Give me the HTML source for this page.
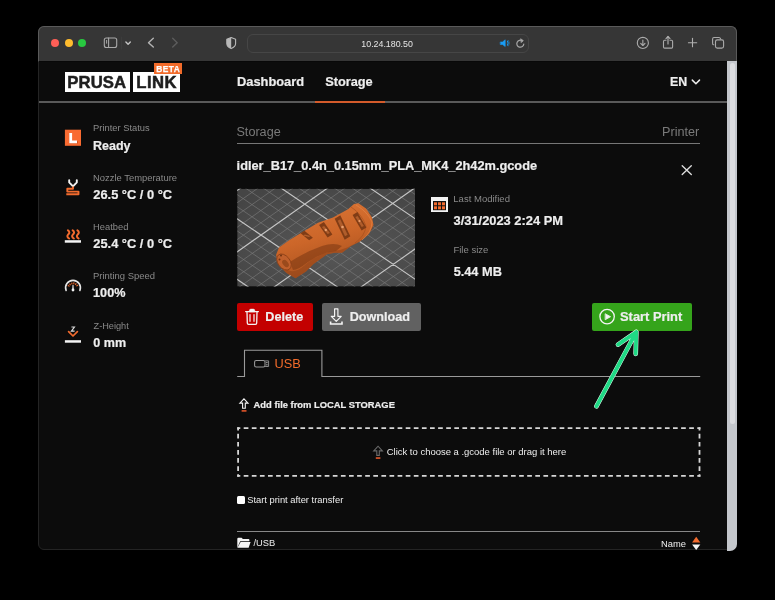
<!DOCTYPE html>
<html><head><meta charset="utf-8">
<style>
*{margin:0;padding:0;box-sizing:border-box}
html,body{width:775px;height:600px;background:#000;overflow:hidden}
body{position:relative;font-family:"Liberation Sans",sans-serif;-webkit-font-smoothing:antialiased}
.a{position:absolute;white-space:nowrap;line-height:1}
#win{position:absolute;left:38px;top:26px;width:699px;height:524px;border-radius:6px;background:#0c0c0c;border:1px solid #242424}
#tb{position:absolute;left:38px;top:26px;width:699px;height:35.5px;background:#363636;border:1px solid #5a5a5a;border-bottom:1px solid #080808;border-radius:6px 6px 0 0}
.g{color:#8a8a8a}
.w{color:#eee}
.b{font-weight:bold;-webkit-text-stroke:0.2px currentColor}
</style></head><body><div id="root" style="position:absolute;left:0;top:0;width:775px;height:600px;will-change:transform">
<div id="win"></div>
<div id="tb"></div>
<!-- toolbar items (page coords) -->
<div class="a" style="left:51.3px;top:39.15px;width:8.2px;height:8.2px;border-radius:50%;background:#fe5f57"></div>
<div class="a" style="left:64.7px;top:39.15px;width:8.2px;height:8.2px;border-radius:50%;background:#febc2e"></div>
<div class="a" style="left:78.1px;top:39.15px;width:8.2px;height:8.2px;border-radius:50%;background:#28c840"></div>

<!-- url bar -->
<div class="a" style="left:246.5px;top:34px;width:282px;height:19px;border-radius:6px;border:1px solid #464646;background:#363636"></div>
<div id="t_102418050" class="a" style="left:361.32px;top:39.66px;font-size:8.83px;color:#e6e6e6">10.24.180.50</div>

<svg class="a" style="left:0;top:0" width="775" height="600" viewBox="0 0 775 600" fill="none" stroke-linecap="round" stroke-linejoin="round">
<!-- sidebar toggle -->
<rect x="104.3" y="38" width="12.4" height="9.5" rx="2" stroke="#a9a9a9" stroke-width="1.1"/>
<line x1="108.6" y1="38" x2="108.6" y2="47.5" stroke="#a9a9a9" stroke-width="1.1"/>
<rect x="106" y="40" width="1.1" height="3.6" fill="#9a9a9a" stroke="none"/>
<line x1="121.7" y1="37" x2="121.7" y2="49" stroke="#404040" stroke-width="0.8"/>
<polyline points="125.9,42 128.1,44.2 130.3,42" stroke="#c4c4c4" stroke-width="1.4"/>
<polyline points="153.3,38.3 148.5,42.7 153.3,47.1" stroke="#b4b4b4" stroke-width="1.4"/>
<polyline points="172.7,38.3 177.2,42.7 172.7,47.1" stroke="#5c5c5c" stroke-width="1.4"/>
<!-- shield -->
<path d="M231.2 37.6 L226.8 39.3 V43.6 Q226.8 46.9 231.2 48.6 Q235.6 46.9 235.6 43.6 V39.3 Z" stroke="#b8b8b8" stroke-width="1.1"/>
<path d="M231.2 37.6 L226.8 39.3 V43.6 Q226.8 46.9 231.2 48.6 Z" fill="#b8b8b8" stroke="none"/>
<!-- speaker -->
<path d="M500.6 42 H502.5 L505.2 39.8 V46.5 L502.5 44.5 H500.6 Z" fill="#1a9cf4" stroke="#1a9cf4" stroke-width="0.6"/>
<path d="M507.5 41.2 Q508.9 43.15 507.5 45.1" stroke="#1a9cf4" stroke-width="1.1"/>
<path d="M508.6 40.3 Q510.6 43.15 508.6 46" stroke="#1a9cf4" stroke-width="0.6" opacity="0.7"/>
<!-- reload -->
<path d="M522.4 40.9 A3.5 3.5 0 1 0 523.8 44" stroke="#a8a8a8" stroke-width="1.2"/>
<path d="M520.9 38.9 L523.4 40.6 L521.3 42.5 Z" fill="#a8a8a8" stroke="#a8a8a8" stroke-width="0.6"/>
<!-- download circle -->
<circle cx="642.85" cy="42.9" r="5.55" stroke="#ababab" stroke-width="1.1"/>
<line x1="642.85" y1="40" x2="642.85" y2="45.3" stroke="#ababab" stroke-width="1.1"/>
<polyline points="640.7,43.3 642.85,45.5 645,43.3" stroke="#ababab" stroke-width="1.1"/>
<!-- share -->
<path d="M666 40.3 H664.6 Q663.5 40.3 663.5 41.4 V47 Q663.5 48.1 664.6 48.1 H671.5 Q672.6 48.1 672.6 47 V41.4 Q672.6 40.3 671.5 40.3 H670" stroke="#ababab" stroke-width="1.1"/>
<line x1="668" y1="36.6" x2="668" y2="44" stroke="#ababab" stroke-width="1.2"/>
<polyline points="666,38.6 668,36.4 670,38.6" stroke="#ababab" stroke-width="1.2"/>
<!-- plus -->
<line x1="688.4" y1="42.7" x2="696.7" y2="42.7" stroke="#b0b0b0" stroke-width="1.1"/>
<line x1="692.5" y1="38.4" x2="692.5" y2="46.8" stroke="#b0b0b0" stroke-width="1.1"/>
<!-- tabs -->
<path d="M713.8 44.8 Q712.6 44.8 712.6 43.4 V38.9 Q712.6 37.5 714 37.5 H718.9 Q720.2 37.5 720.6 38.9" stroke="#ababab" stroke-width="1.1"/>
<rect x="715.5" y="39.9" width="8.1" height="8.2" rx="1.8" stroke="#ababab" stroke-width="1.1"/>
</svg>
<!-- header -->
<div class="a" style="left:64.9px;top:71.5px;width:65.2px;height:20.2px;background:#fff"></div>
<div id="t_PRUSA" class="a b" style="left:67.3px;top:75px;font-size:16.7px;letter-spacing:0.1px;color:#1e1e1e;-webkit-text-stroke:0.5px #1e1e1e">PRUSA</div>
<div class="a" style="left:133.1px;top:71.5px;width:47.2px;height:20.2px;background:#fff"></div>
<div id="t_LINK" class="a b" style="left:136.3px;top:75px;font-size:16.7px;letter-spacing:0.45px;color:#1e1e1e;-webkit-text-stroke:0.5px #1e1e1e">LINK</div>
<div class="a" style="left:154.1px;top:63.4px;width:28.1px;height:10.3px;background:#f26b2a"></div>
<div id="t_BETA" class="a b" style="left:156.3px;top:65px;font-size:8.4px;letter-spacing:0.42px;color:#fff;-webkit-text-stroke:0.25px #fff">BETA</div>

<div id="t_Dashboard" class="a b w" style="left:236.94px;top:76.2px;font-size:12.86px">Dashboard</div>
<div id="t_Storage" class="a b w" style="left:325.14px;top:76.1px;font-size:12.79px">Storage</div>
<div id="t_EN" class="a b w" style="left:669.89px;top:75.9px;font-size:12.38px">EN</div>
<div class="a" style="left:38.5px;top:101px;width:688.5px;height:1.5px;background:#5a5a5a"></div>
<div class="a" style="left:314.5px;top:100.5px;width:70px;height:2px;background:#d45b2b"></div>

<!-- sidebar -->

<div id="t_PrinterSta" class="a g" style="left:93.06px;top:123.95px;font-size:9.35px">Printer Status</div>
<div id="t_Ready" class="a b w" style="left:93.0px;top:140.2px;font-size:12.51px">Ready</div>
<div id="t_NozzleTemp" class="a g" style="left:93.01px;top:172.8px;font-size:9.42px">Nozzle Temperature</div>
<div id="t_265C0C" class="a b w" style="left:93.32px;top:189.0px;font-size:12.83px">26.5 °C / 0 °C</div>
<div id="t_Heatbed" class="a g" style="left:93.09px;top:222.91px;font-size:9.34px">Heatbed</div>
<div id="t_254C0C" class="a b w" style="left:93.32px;top:237.8px;font-size:12.83px">25.4 °C / 0 °C</div>
<div id="t_PrintingSp" class="a g" style="left:93.08px;top:271.34px;font-size:9.45px">Printing Speed</div>
<div id="t_100" class="a b w" style="left:93.1px;top:287.18px;font-size:12.65px">100%</div>
<div id="t_ZHeight" class="a g" style="left:93.57px;top:321.8px;font-size:9.18px">Z-Height</div>
<div id="t_0mm" class="a b w" style="left:93.35px;top:336.81px;font-size:12.57px">0 mm</div>

<svg class="a" style="left:0;top:0" width="775" height="600" viewBox="0 0 775 600" fill="none" stroke-linecap="round" stroke-linejoin="round">
<!-- printer status -->
<rect x="64.9" y="129.7" width="16.1" height="16.1" fill="#f96b31"/>
<path d="M70.1 134 V141.8 H77.4" stroke="#9a3a14" stroke-width="2.6" stroke-linecap="butt" stroke-linejoin="miter" opacity="0.5" transform="translate(0.5,0.5)"/>
<path d="M70.7 133 V141.8 H77" stroke="#fff" stroke-width="2.8" stroke-linecap="butt" stroke-linejoin="miter"/>
<!-- nozzle -->
<path d="M69.2 180.1 V182.4 L73 186.4 L76.8 182.4 V180.1" stroke="#f2f2f2" stroke-width="1.9"/>
<path d="M73 186.6 V188.8 H67.3 V191.6 H78.5 V194.3 H66.3" stroke="#f26b2e" stroke-width="1.9" stroke-linejoin="round" stroke-linecap="butt"/>
<!-- heatbed -->
<path d="M67.90 230.4 C69.90 231.7 69.60 233.1 68.20 234.4 C66.80 235.7 67.20 237.3 69.10 238.5 M72.65 230.4 C74.65 231.7 74.35 233.1 72.95 234.4 C71.55 235.7 71.95 237.3 73.85 238.5 M77.40 230.4 C79.40 231.7 79.10 233.1 77.70 234.4 C76.30 235.7 76.70 237.3 78.60 238.5" stroke="#f26b2e" stroke-width="2"/>
<rect x="64.8" y="240.2" width="16.2" height="2.5" fill="#f4f4f4"/>
<!-- gauge -->
<path d="M66.1 290.4 A7.4 7.4 0 1 1 79.9 290.4" stroke="#e6e6e6" stroke-width="1.6" stroke-linecap="round"/>
<path d="M68.4 286.4 A5 5 0 0 1 77.6 286.4" stroke="#e0632b" stroke-width="2" stroke-dasharray="1.2 0.8" stroke-linecap="butt"/>
<path d="M72.6 290 L73 285 L73.4 290 Z" fill="#f4f4f4" stroke="#f4f4f4" stroke-width="0.6"/>
<circle cx="73" cy="290" r="1.4" fill="#f4f4f4"/>
<!-- z height -->
<path d="M71.4 327 H74.4 L71.4 331.1 H74.6" stroke="#d8d8d8" stroke-width="1.2" stroke-linecap="butt" stroke-linejoin="miter"/>
<polyline points="68.6,331.7 73,336 77.4,331.7" stroke="#f26b2e" stroke-width="1.7"/>
<rect x="64.9" y="340.2" width="16.1" height="2.5" fill="#f4f4f4"/>
</svg>
<!-- main -->
<div id="t_Storage2" class="a" style="left:236.44px;top:125.64px;font-size:12.65px;color:#7a7a7a">Storage</div>
<div id="t_Printer" class="a" style="left:662.05px;top:125.6px;font-size:12.63px;color:#7a7a7a">Printer</div>
<div class="a" style="left:237px;top:143px;width:463px;height:1px;background:#777"></div>
<div id="t_idlerB1704" class="a b w" style="left:236.59px;top:160.2px;font-size:12.79px">idler_B17_0.4n_0.15mm_PLA_MK4_2h42m.gcode</div>

<!-- thumb -->
<svg class="a" style="left:0;top:0" width="775" height="600" viewBox="0 0 775 600">
<defs><clipPath id="thc"><rect x="237.2" y="188.8" width="177.8" height="97.8"/></clipPath>
<radialGradient id="thg" cx="0.55" cy="0.6" r="0.7"><stop offset="0" stop-color="#575757"/><stop offset="1" stop-color="#454545"/></radialGradient>
<linearGradient id="pg" x1="0" y1="0" x2="0.35" y2="1"><stop offset="0" stop-color="#de7838"/><stop offset="0.55" stop-color="#cc6629"/><stop offset="1" stop-color="#a9521f"/></linearGradient>
</defs>
<g clip-path="url(#thc)">
<rect x="237.2" y="188.8" width="177.8" height="97.8" fill="url(#thg)"/>
<path d="M-323.4 188.9L338.2 638.7 M-322.5 291.0L331.3 -170.0 M-314.6 182.7L346.9 632.6 M-313.7 297.0L340.2 -163.9 M-305.9 176.5L355.7 626.4 M-304.8 303.0L349.0 -157.9 M-297.1 170.4L364.4 620.2 M-296.0 309.0L357.9 -151.9 M-279.7 158.0L381.9 607.9 M-278.3 321.1L375.6 -139.9 M-270.9 151.9L390.6 601.7 M-269.4 327.1L384.4 -133.9 M-262.2 145.7L399.4 595.6 M-260.6 333.1L393.3 -127.8 M-253.4 139.5L408.1 589.4 M-251.7 339.1L402.1 -121.8 M-235.9 127.2L425.6 577.1 M-234.0 351.2L419.8 -109.8 M-227.2 121.1L434.4 570.9 M-225.2 357.2L428.7 -103.8 M-218.4 114.9L443.1 564.7 M-216.3 363.2L437.5 -97.8 M-209.7 108.7L451.8 558.6 M-207.5 369.2L446.4 -91.7 M-192.2 96.4L469.3 546.2 M-189.8 381.2L464.0 -79.7 M-183.5 90.2L478.1 540.1 M-180.9 387.3L472.9 -73.7 M-174.7 84.1L486.8 533.9 M-172.1 393.3L481.7 -67.7 M-166.0 77.9L495.6 527.7 M-163.3 399.3L490.6 -61.7 M-148.5 65.6L513.1 515.4 M-145.6 411.3L508.3 -49.6 M-139.7 59.4L521.8 509.2 M-136.7 417.3L517.1 -43.6 M-131.0 53.2L530.6 503.1 M-127.9 423.4L526.0 -37.6 M-122.2 47.1L539.3 496.9 M-119.0 429.4L534.8 -31.6 M-104.8 34.7L556.8 484.6 M-101.3 441.4L552.5 -19.5 M-96.0 28.6L565.5 478.4 M-92.5 447.4L561.4 -13.5 M-87.3 22.4L574.3 472.3 M-83.6 453.4L570.2 -7.5 M-78.5 16.2L583.0 466.1 M-74.8 459.5L579.1 -1.5 M-61.0 3.9L600.5 453.8 M-57.1 471.5L596.8 10.5 M-52.3 -2.3L609.3 447.6 M-48.2 477.5L605.6 16.6 M-43.5 -8.4L618.0 441.4 M-39.4 483.5L614.5 22.6 M-34.8 -14.6L626.8 435.3 M-30.5 489.5L623.3 28.6 M-17.3 -26.9L644.2 422.9 M-12.8 501.6L641.0 40.6 M-8.6 -33.1L653.0 416.8 M-4.0 507.6L649.9 46.6 M0.2 -39.2L661.7 410.6 M4.9 513.6L658.7 52.7 M8.9 -45.4L670.5 404.4 M13.7 519.6L667.6 58.7 M26.4 -57.7L688.0 392.1 M31.4 531.7L685.3 70.7 M35.2 -63.9L696.7 385.9 M40.3 537.7L694.1 76.7 M43.9 -70.1L705.5 379.8 M49.1 543.7L702.9 82.7 M52.7 -76.2L714.2 373.6 M58.0 549.7L711.8 88.8 M70.2 -88.6L731.7 361.3 M75.6 561.7L729.5 100.8 M78.9 -94.7L740.4 355.1 M84.5 567.8L738.3 106.8 M87.6 -100.9L749.2 348.9 M93.3 573.8L747.2 112.8 M96.4 -107.1L757.9 342.8 M102.2 579.8L756.0 118.8 M113.9 -119.4L775.4 330.5 M119.9 591.8L773.7 130.9 M122.6 -125.6L784.2 324.3 M128.7 597.8L782.6 136.9 M131.4 -131.7L792.9 318.1 M137.6 603.9L791.4 142.9 M140.1 -137.9L801.7 312.0 M146.4 609.9L800.3 148.9 M157.6 -150.2L819.1 299.6 M164.1 621.9L818.0 161.0 M166.3 -156.4L827.9 293.5 M173.0 627.9L826.8 167.0 M175.1 -162.6L836.6 287.3 M181.8 633.9L835.7 173.0 M183.8 -168.7L845.4 281.1 M190.7 640.0L844.5 179.0" stroke="#7a7a7a" stroke-width="0.65" fill="none"/>
<path d="M-332.1 195.0L329.4 644.9 M-331.4 285.0L322.5 -176.0 M-288.4 164.2L373.1 614.1 M-287.1 315.1L366.7 -145.9 M-244.7 133.4L416.9 583.2 M-242.9 345.1L411.0 -115.8 M-200.9 102.6L460.6 552.4 M-198.6 375.2L455.2 -85.7 M-157.2 71.7L504.3 521.6 M-154.4 405.3L499.4 -55.6 M-113.5 40.9L548.0 490.8 M-110.2 435.4L543.7 -25.6 M-69.8 10.1L591.8 459.9 M-65.9 465.5L587.9 4.5 M-26.0 -20.8L635.5 429.1 M-21.7 495.6L632.2 34.6 M17.7 -51.6L679.2 398.3 M22.6 525.6L676.4 64.7 M61.4 -82.4L722.9 367.4 M66.8 555.7L720.6 94.8 M105.1 -113.2L766.7 336.6 M111.0 585.8L764.9 124.9 M148.9 -144.1L810.4 305.8 M155.3 615.9L809.1 154.9 M192.6 -174.9L854.1 275.0 M199.5 646.0L853.4 185.0" stroke="#c4c4c4" stroke-width="1.15" fill="none"/>
<path id="pbody" d="M358.5 203.3 L366 208.5 L372 217.5 L373.5 225 L369 234 L360 241.5 L351 246 L342 252.8 L334.5 252.8 L327 254.3 L313.5 264 L306 271.5 L295.5 278.3 L286.5 273 L279 265.5 L276 255 L279 247.5 L289.5 240 L303 231.8 L318 222.8 L333 217.5 L348 209.3 L354 204 Z" fill="url(#pg)"/>
<path d="M279 265.5 L286.5 273 L295.5 278.3 L306 271.5 L313.5 264 L327 254.3 L334.5 252.8 L342 252.8 L351 246 L360 241.5 L369 234 L373.5 225 L372 230 Q360 244 340 250 Q320 252 305 265 Q295 274 288 270 Z" fill="#8f4419" opacity="0.55"/>
<path d="M290 262 Q305 252 322 246 Q334 242 342 246 L336 251 Q322 252 308 262 Q298 270 293 270 Z" fill="#7a3713" opacity="0.55"/>
<path d="M356 205 Q368 212 372 222 Q372 232 362 240" stroke="#e8884a" stroke-width="1" fill="none" opacity="0.6"/>
<path d="M351 207 Q362 214 366 226 Q365 236 355 243" stroke="#9c4a1c" stroke-width="0.9" fill="none" opacity="0.6"/>
<ellipse cx="284" cy="262" rx="6" ry="9" transform="rotate(-38 284 262)" fill="#c0602c" stroke="#8e4219" stroke-width="0.9"/>
<ellipse cx="285.5" cy="263.5" rx="2.6" ry="4.2" transform="rotate(-38 285.5 263.5)" fill="#9a4a1c"/>
<circle cx="281" cy="255.5" r="1" fill="#6e3311"/><circle cx="279.5" cy="259.5" r="1" fill="#6e3311"/>
<path d="M319.1 224.9 L323.9 222.1 L332.4 234.6 L327.6 237.4 Z" fill="#7a3814" opacity="0.92"/>
<path d="M321.9 227.1 L324.1 225.9 L329.9 232.9 L327.7 234.1 Z" fill="#b5602e" opacity="0.9"/>
<path d="M334.7 218.7 L340.3 215.3 L350.3 236.3 L344.7 239.7 Z" fill="#7a3814" opacity="0.92"/>
<path d="M337.7 220.8 L340.3 219.2 L347.6 234.7 L345.0 236.3 Z" fill="#b5602e" opacity="0.9"/>
<path d="M352.6 214.9 L357.4 212.1 L366.4 227.6 L361.6 230.4 Z" fill="#7a3814" opacity="0.92"/>
<path d="M355.4 217.1 L357.6 215.9 L363.9 225.9 L361.7 227.1 Z" fill="#b5602e" opacity="0.9"/>
<path d="M300.6 233.2 L304.4 230.8 L312.9 237.8 L309.1 240.2 Z" fill="#7a3814" opacity="0.92"/>
<path d="M303.1 235.5 L304.9 234.5 L310.7 236.0 L308.9 237.0 Z" fill="#b5602e" opacity="0.9"/>
<circle cx="325.8" cy="230" r="1.2" fill="#e8a070"/><circle cx="342.5" cy="227" r="1.3" fill="#e8a070"/><circle cx="359.5" cy="221" r="1.1" fill="#e8a070"/>
</g>
</svg>
<!-- /thumb -->
<div id="t_LastModifi" class="a g" style="left:453.34px;top:193.73px;font-size:9.52px">Last Modified</div>
<div id="t_3312023224" class="a b w" style="left:453.5px;top:214.8px;font-size:12.88px">3/31/2023 2:24 PM</div>
<div id="t_Filesize" class="a g" style="left:453.46px;top:244.77px;font-size:9.5px">File size</div>
<div id="t_544MB" class="a b w" style="left:453.63px;top:265.8px;font-size:12.77px">5.44 MB</div>

<div class="a" style="left:237px;top:303px;width:76px;height:28px;border-radius:2px;background:#c30000"></div>
<div id="t_Delete" class="a b w" style="left:265.35px;top:310.7px;font-size:12.61px">Delete</div>
<div class="a" style="left:321.5px;top:303px;width:99px;height:28px;border-radius:2px;background:#616161"></div>
<div id="t_Download" class="a b w" style="left:349.63px;top:310.7px;font-size:12.66px">Download</div>
<div class="a" style="left:592px;top:303px;width:100px;height:28px;border-radius:2px;background:#35a41b"></div>
<div id="t_StartPrint" class="a b w" style="left:620.03px;top:310.7px;font-size:12.89px">Start Print</div>

<div id="t_USB" class="a" style="left:274.58px;top:358.0px;font-size:12.78px;color:#f26b2a">USB</div>
<div id="t_Addfilefro" class="a b w" style="left:253.6px;top:400.5px;font-size:9.38px">Add file from LOCAL STORAGE</div>
<svg class="a" style="left:0;top:0" width="775" height="600" viewBox="0 0 775 600" fill="none">
<g stroke="#d6d6d6" stroke-width="1.8" stroke-dasharray="4.7 3.4" stroke-dashoffset="1.6">
<path d="M237.2 428.2 H700.4"/><path d="M237.2 475.9 H700.4"/><path d="M238.1 427.3 V476.8"/><path d="M699.5 427.3 V476.8"/>
</g></svg>
<div id="t_Clicktocho" class="a w" style="left:386.73px;top:447.05px;font-size:9.47px">Click to choose a .gcode file or drag it here</div>
<div class="a" style="left:237px;top:496px;width:8px;height:8px;border-radius:1.5px;background:#fff"></div>
<div id="t_Startprint" class="a w" style="left:247.2px;top:496.22px;font-size:9.35px">Start print after transfer</div>
<div class="a" style="left:237px;top:531px;width:463px;height:1px;background:#888"></div>
<div id="t_USB2" class="a w" style="left:253.39px;top:538.58px;font-size:9.34px">/USB</div>
<div id="t_Name" class="a w" style="left:660.98px;top:539.64px;font-size:9.37px">Name</div>

<svg class="a" style="left:0;top:0" width="775" height="600" viewBox="0 0 775 600" fill="none" stroke-linecap="round" stroke-linejoin="round">
<!-- EN chevron -->
<polyline points="692.3,80.1 695.9,83.7 699.5,80.1" stroke="#ececec" stroke-width="1.5"/>
<!-- close x -->
<path d="M682.2 165.7 L691.3 174.6 M691.3 165.7 L682.2 174.6" stroke="#dedede" stroke-width="1.35"/>
<!-- calendar -->
<rect x="431" y="197" width="17" height="15" fill="#f2f2f2"/>
<rect x="433" y="201" width="13" height="9.2" fill="#141414"/>
<g fill="#f36a2d">
<rect x="434" y="202.3" width="3" height="3"/><rect x="438" y="202.3" width="3" height="3"/><rect x="442" y="202.3" width="3" height="3"/>
<rect x="434" y="206.3" width="3" height="3"/><rect x="438" y="206.3" width="3" height="3"/><rect x="442" y="206.3" width="3" height="3"/>
</g>
<!-- trash -->
<path d="M245.6 311.6 H258.4" stroke="#f4f4f4" stroke-width="1.3"/>
<path d="M249.4 311.6 V310.6 Q249.4 309.1 250.9 309.1 H253.3 Q254.8 309.1 254.8 310.6 V311.6 Z" fill="#f4f4f4" stroke="#f4f4f4" stroke-width="0.5"/>
<path d="M247 312 L247.3 323 Q247.3 324.3 248.6 324.3 H255.4 Q256.7 324.3 256.7 323 L257 312" stroke="#f4f4f4" stroke-width="1.3"/>
<path d="M250 314.6 V321.2 M254 314.6 V321.2" stroke="#f0d0d0" stroke-width="1.4"/>
<!-- download icon -->
<path d="M334.6 308.9 H337.9 V316.3 H341.2 L336.25 321.3 L331.3 316.3 H334.6 Z" stroke="#f4f4f4" stroke-width="1.2"/>
<path d="M330.6 321.4 V324 H342 V321.4" stroke="#f4f4f4" stroke-width="1.6" stroke-linecap="butt" stroke-linejoin="miter"/>
<!-- play circle -->
<circle cx="607.1" cy="316.6" r="7.2" stroke="#f4f4f4" stroke-width="1.3"/>
<path d="M605.5 313.9 L610.6 316.7 L605.5 319.6 Z" fill="#f4f4f4" stroke="#f4f4f4" stroke-width="0.8"/>
<!-- tab outline -->
<path d="M237.2 376.5 H244.5 V350.3 H321.9 V376.5 H700.2" stroke="#9a9a9a" stroke-width="1.1" stroke-linecap="butt" stroke-linejoin="miter"/>
<!-- usb icon -->
<rect x="254.6" y="360.4" width="10.4" height="6.6" rx="1.6" stroke="#9a9a9a" stroke-width="1.05"/>
<path d="M265.1 360.9 H268.6 V366.5 H265.1" stroke="#8a8a8a" stroke-width="1" stroke-linejoin="miter" stroke-linecap="butt"/>
<rect x="266.1" y="362" width="1.5" height="1.2" fill="#9a9a9a"/><rect x="266.1" y="364.2" width="1.5" height="1.2" fill="#9a9a9a"/>
<!-- upload icon small (add file) -->
<path d="M242.6 408.3 V403.1 H239.9 L243.95 398.8 L248 403.1 H245.3 V408.3 Z" stroke="#f4f4f4" stroke-width="1.1" stroke-linejoin="miter"/>
<rect x="241.6" y="410.1" width="4.9" height="1.6" fill="#e0552a"/>
<!-- upload icon (dropzone) -->
<path d="M376.8 455.4 V450.9 H373.7 L378.05 446.2 L382.4 450.9 H379.3 V455.4 Z" stroke="#6a6a6a" stroke-width="1.1" stroke-linejoin="miter"/>
<rect x="375.8" y="457.2" width="4.6" height="1.7" fill="#d9552a"/>
<!-- folder -->
<path d="M237.3 539 Q237.3 537.8 238.4 537.8 H241.6 L242.9 539.1 H248.6 Q249.4 539.1 249.4 539.9 V541.2 H240.2 L237.3 547.7 Z" fill="#f4f4f4"/>
<path d="M240.6 542 H250.6 L248.6 547.8 H237.4 Z" fill="#f4f4f4"/>
<!-- sort arrows -->
<path d="M692.1 542.6 L696.2 536.7 L700.3 542.6 Z" fill="#f26b2e"/>
<path d="M692.1 544.5 L700.3 544.5 L696.2 550.1 Z" fill="#f4f4f4"/>
</svg>
<!-- arrow -->
<svg class="a" style="left:0;top:0" width="775" height="600" viewBox="0 0 775 600" fill="none" stroke-linecap="round" stroke-linejoin="round">
<path d="M596.4 406.3 L636.3 332 M618 344.6 L636.3 332 L635.7 353.8" stroke="#f0fff6" stroke-width="4.7"/>
<path d="M596.4 406.3 L636.3 332 M618 344.6 L636.3 332 L635.7 353.8" stroke="#1fd985" stroke-width="3.8"/>
</svg>
<!-- scrollbar -->
<div class="a" style="left:727px;top:60.5px;width:10px;height:490px;background:#c4c7cc;border-bottom-right-radius:7px"></div>
<div class="a" style="left:729.5px;top:63px;width:5.5px;height:360.5px;border-radius:3px;background:#dcdde0"></div>
</div></body></html>
